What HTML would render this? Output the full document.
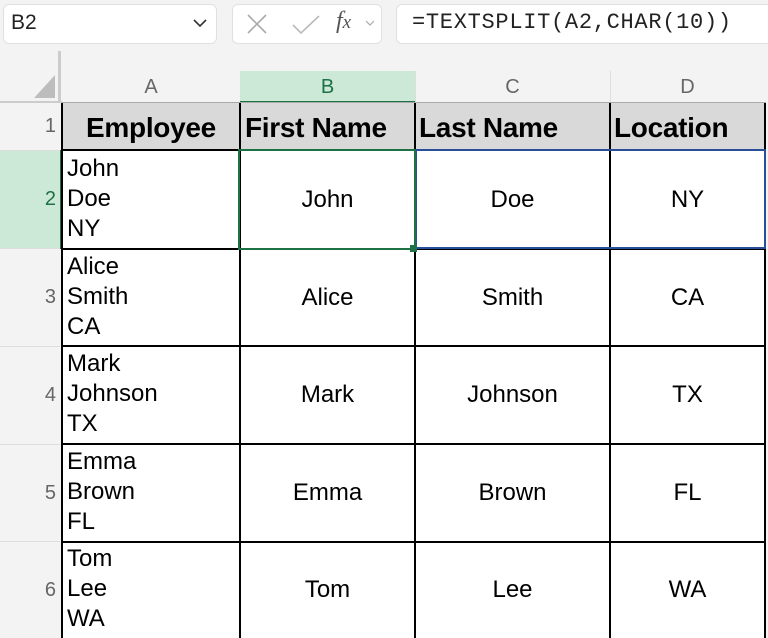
<!DOCTYPE html><html><head><style>
body{margin:0;width:768px;height:638px;overflow:hidden;background:#f3f3f3;font-family:"Liberation Sans",Arial,sans-serif;position:relative}
.a{position:absolute}
.box{position:absolute;background:#fff;border:1px solid #e0e0e0;border-radius:6px}
.c{position:absolute;display:flex;align-items:center;justify-content:center;font-size:24px;color:#000}
.h{position:absolute;display:flex;align-items:center;justify-content:center;font-size:20px;color:#666}
.rh{position:absolute;left:0;width:56px;text-align:right;font-size:20px;color:#666;display:flex;align-items:center;justify-content:flex-end}
.t{position:absolute;font-size:24px;line-height:30px;color:#000;left:67px}
.hl{position:absolute;background:#000;height:2px;left:62px;width:704px}
.vl{position:absolute;background:#000;width:2px;top:103px;height:535px}
.hd{position:absolute;display:flex;align-items:center;font-size:28px;font-weight:bold;color:#000;top:104px;height:48px;letter-spacing:-0.3px}
</style></head><body>
<div class="box" style="left:3px;top:4px;width:212px;height:38px"></div>
<div class="a" style="left:11px;top:11px;font-size:21px;color:#222">B2</div>
<svg class="a" style="left:192px;top:18px" width="16" height="10"><path d="M2 2 L8 8 L14 2" fill="none" stroke="#333" stroke-width="1.6"/></svg>
<div class="box" style="left:232px;top:4px;width:148px;height:38px"></div>
<svg class="a" style="left:246px;top:13px" width="24" height="22"><path d="M2 2 L20 20 M20 2 L2 20" stroke="#aaa" stroke-width="1.6"/></svg>
<svg class="a" style="left:291px;top:13px" width="30" height="22"><path d="M2 12 L10 20 L28 3" fill="none" stroke="#bbb" stroke-width="1.6"/></svg>
<div class="a" style="left:336px;top:8px;font-size:24px;font-style:italic;font-family:'Liberation Serif',serif;color:#555">f<span style="font-size:19px">x</span></div>
<svg class="a" style="left:365px;top:20px" width="10" height="6"><path d="M1 1 L5 5 L9 1" fill="none" stroke="#aaa" stroke-width="1.2"/></svg>
<div class="box" style="left:396px;top:4px;width:380px;height:38px"></div>
<div class="a" style="left:412px;top:10px;font-size:22px;font-family:'Liberation Mono',monospace;color:#222;letter-spacing:0.7px">=TEXTSPLIT(A2,CHAR(10))</div>
<div class="a" style="left:58px;top:51px;width:3px;height:52px;background:#ccc"></div>
<div class="a" style="left:0;top:101px;width:62px;height:2px;background:#ccc"></div>
<svg class="a" style="left:34px;top:75px" width="22" height="24"><path d="M21 0 L21 23 L0 23 Z" fill="#bdbdbd"/></svg>
<div class="a" style="left:240px;top:71px;width:175px;height:32px;background:#cbe9d6;border-bottom:2px solid #1e7145;box-sizing:border-box"></div>
<div class="a" style="left:0;top:150px;width:62px;height:99px;background:#cbe9d6;border-right:2px solid #1e7145;box-sizing:border-box"></div>
<div class="a" style="left:415px;top:71px;width:1px;height:32px;background:#ddd"></div>
<div class="a" style="left:610px;top:71px;width:1px;height:32px;background:#ddd"></div>
<div class="h" style="left:62px;top:71px;width:178px;height:32px">A</div>
<div class="h" style="left:240px;top:71px;width:175px;height:32px;color:#1e7145">B</div>
<div class="h" style="left:415px;top:71px;width:195px;height:32px">C</div>
<div class="h" style="left:610px;top:71px;width:155px;height:32px">D</div>
<div class="a" style="left:0;top:248px;width:60px;height:1px;background:#ddd"></div>
<div class="a" style="left:0;top:346px;width:60px;height:1px;background:#ddd"></div>
<div class="a" style="left:0;top:444px;width:60px;height:1px;background:#ddd"></div>
<div class="a" style="left:0;top:541px;width:60px;height:1px;background:#ddd"></div>
<div class="a" style="left:0;top:150px;width:60px;height:1px;background:#ddd"></div>
<div class="rh" style="top:103px;height:47px">1</div>
<div class="rh" style="top:150px;height:99px;color:#1e7145">2</div>
<div class="rh" style="top:249px;height:97px">3</div>
<div class="rh" style="top:346px;height:98px">4</div>
<div class="rh" style="top:444px;height:98px">5</div>
<div class="rh" style="top:542px;height:96px">6</div>
<div class="a" style="left:62px;top:103px;width:704px;height:47px;background:#d9d9d9"></div>
<div class="a" style="left:62px;top:150px;width:704px;height:488px;background:#fff"></div>
<div class="hl" style="top:102px;background:#aaa;height:1px"></div>
<div class="hl" style="top:149px"></div><div class="hl" style="top:248px"></div><div class="hl" style="top:345px"></div><div class="hl" style="top:443px"></div><div class="hl" style="top:541px"></div>
<div class="vl" style="left:61px"></div><div class="vl" style="left:239px"></div><div class="vl" style="left:414px"></div><div class="vl" style="left:609px"></div><div class="vl" style="left:764px"></div>
<div class="a" style="left:415px;top:149px;width:351px;height:100px;border:2px solid #2a4f9a;box-sizing:border-box"></div>
<div class="a" style="left:238px;top:149px;width:178px;height:101px;border:2px solid #1e7145;box-sizing:border-box"></div>
<div class="a" style="left:410px;top:245px;width:7px;height:7px;background:#1e7145"></div>
<div class="hd" style="left:62px;width:178px;justify-content:center">Employee</div>
<div class="hd" style="left:245px">First Name</div>
<div class="hd" style="left:419px">Last Name</div>
<div class="hd" style="left:614px">Location</div>
<div class="t" style="top:154px">John<br>Doe<br>NY</div>
<div class="t" style="top:252px">Alice<br>Smith<br>CA</div>
<div class="t" style="top:349px">Mark<br>Johnson<br>TX</div>
<div class="t" style="top:447px">Emma<br>Brown<br>FL</div>
<div class="t" style="top:544px">Tom<br>Lee<br>WA</div>
<div class="c" style="left:240px;top:150px;width:175px;height:99px">John</div>
<div class="c" style="left:415px;top:150px;width:195px;height:99px">Doe</div>
<div class="c" style="left:610px;top:150px;width:155px;height:99px">NY</div>
<div class="c" style="left:240px;top:249px;width:175px;height:97px">Alice</div>
<div class="c" style="left:415px;top:249px;width:195px;height:97px">Smith</div>
<div class="c" style="left:610px;top:249px;width:155px;height:97px">CA</div>
<div class="c" style="left:240px;top:346px;width:175px;height:98px">Mark</div>
<div class="c" style="left:415px;top:346px;width:195px;height:98px">Johnson</div>
<div class="c" style="left:610px;top:346px;width:155px;height:98px">TX</div>
<div class="c" style="left:240px;top:444px;width:175px;height:98px">Emma</div>
<div class="c" style="left:415px;top:444px;width:195px;height:98px">Brown</div>
<div class="c" style="left:610px;top:444px;width:155px;height:98px">FL</div>
<div class="c" style="left:240px;top:542px;width:175px;height:96px">Tom</div>
<div class="c" style="left:415px;top:542px;width:195px;height:96px">Lee</div>
<div class="c" style="left:610px;top:542px;width:155px;height:96px">WA</div>
</body></html>
